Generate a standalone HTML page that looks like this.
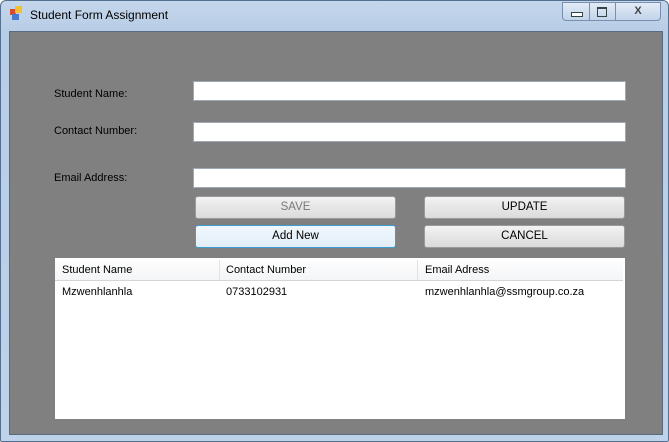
<!DOCTYPE html><html><head><style>
body{margin:0;width:669px;height:442px;overflow:hidden;font-family:"Liberation Sans",sans-serif;font-size:11px;}
.win{position:absolute;left:0;top:0;width:667px;height:440px;border:1px solid #55708f;border-radius:6px 6px 2px 2px;background:linear-gradient(#c4d6ec,#b8cde6 30px,#bed2ea);}
.client{position:absolute;left:8px;top:30px;width:652px;height:402px;background:#808080;border:1px solid #5a6b80;}
.a{position:absolute}
.lbl{position:absolute;color:#000;font-size:11px}
.tb{position:absolute;left:193px;width:431px;height:18px;background:#fff;border:1px solid #a0a8b4}
.btn{position:absolute;width:199px;height:21px;border:1px solid #9a9a9a;border-radius:3px;background:linear-gradient(#f3f3f3,#e6e6e6 50%,#dcdcdc);text-align:center;line-height:21px;font-size:11.5px}
</style></head><body>
<div class="win">
<div class="a" style="left:9px;top:8px;width:6px;height:6px;background:#d84a2a"></div>
<div class="a" style="left:14px;top:5px;width:7px;height:7px;background:#f2c030"></div>
<div class="a" style="left:11px;top:13px;width:7px;height:6px;background:#4a7ad0"></div>
<div class="a" style="left:29px;top:7px;font-size:12px;color:#000">Student Form Assignment</div>
<div class="a" style="left:561px;top:1px;width:26px;height:17px;border:1px solid #7890ad;border-radius:0 0 0 4px;background:linear-gradient(#e2ebf6,#c2d4ea)"><div class="a" style="left:8px;top:9px;width:10px;height:3px;border:1px solid #344;background:#fff"></div></div>
<div class="a" style="left:588px;top:1px;width:25px;height:17px;border:1px solid #7890ad;background:linear-gradient(#e2ebf6,#c2d4ea)"><div class="a" style="left:7px;top:4px;width:8px;height:7px;border:1px solid #344;border-top-width:2px"></div></div>
<div class="a" style="left:614px;top:1px;width:44px;height:17px;border:1px solid #7890ad;border-radius:0 0 4px 0;background:linear-gradient(#e2ebf6,#c2d4ea);text-align:center;font-weight:bold;color:#444;line-height:17px">X</div>
<div class="client"></div>
</div>
<div class="lbl" style="left:54px;top:88px">Student Name:</div>
<div class="lbl" style="left:54px;top:125px">Contact Number:</div>
<div class="lbl" style="left:54px;top:172px">Email Address:</div>
<div class="tb" style="top:81px"></div>
<div class="tb" style="top:122px"></div>
<div class="tb" style="top:168px"></div>
<div class="btn" style="left:195px;top:196px;color:#777">SAVE</div>
<div class="btn" style="left:195px;top:225px;border-color:#3c9cd4;background:linear-gradient(#f0f7fc,#e2eef8)">Add New</div>
<div class="btn" style="left:424px;top:196px">UPDATE</div>
<div class="btn" style="left:424px;top:225px">CANCEL</div>
<div class="a" style="left:55px;top:258px;width:570px;height:161px;background:#fff">
<div class="a" style="left:0;top:0;width:568px;height:22px;background:linear-gradient(#fff,#f4f5f7);border-bottom:1px solid #d5d5d5"></div>
<div class="a" style="left:164px;top:2px;width:1px;height:20px;background:#e2e3e5"></div>
<div class="a" style="left:362px;top:2px;width:1px;height:20px;background:#e2e3e5"></div>
<div class="a" style="left:7px;top:6px">Student Name</div>
<div class="a" style="left:171px;top:6px">Contact Number</div>
<div class="a" style="left:370px;top:6px">Email Adress</div>
<div class="a" style="left:7px;top:28px">Mzwenhlanhla</div>
<div class="a" style="left:171px;top:28px">0733102931</div>
<div class="a" style="left:370px;top:28px">mzwenhlanhla@ssmgroup.co.za</div>
</div>
</body></html>
